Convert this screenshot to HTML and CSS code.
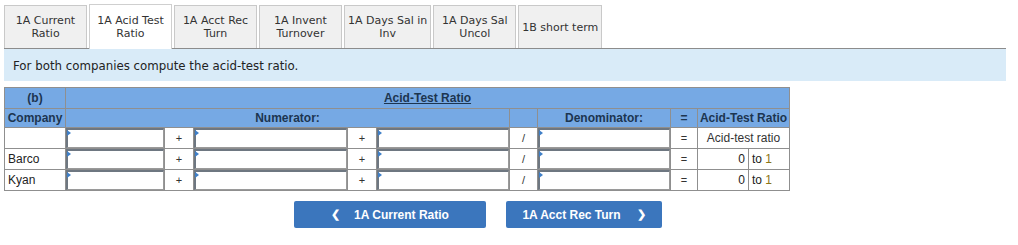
FILE: index.html
```html
<!DOCTYPE html>
<html lang="en">
<head>
  <meta charset="UTF-8">
  <title>Acid-Test Ratio</title>
  <link rel="stylesheet" href="styles.css">
</head>
<body>
  <div class="page">
    <!-- zakładki -->
    <div class="tabs">
      <div class="tab">1A Current<br>Ratio</div>
      <div class="tab active">1A Acid Test<br>Ratio</div>
      <div class="tab">1A Acct Rec<br>Turn</div>
      <div class="tab">1A Invent<br>Turnover</div>
      <div class="tab">1A Days Sal in<br>Inv</div>
      <div class="tab">1A Days Sal<br>Uncol</div>
      <div class="tab">1B short term</div>
    </div>
    <div class="instructions">For both companies compute the acid-test ratio.</div>

    <table class="ratio-table">
      <colgroup>
        <col style="width:61px"><col style="width:99px"><col style="width:29px">
        <col style="width:154px"><col style="width:29px"><col style="width:133px">
        <col style="width:28px"><col style="width:133px"><col style="width:27px">
        <col style="width:51px"><col style="width:41px">
      </colgroup>
      <tr class="head head-top">
        <th>(b)</th>
        <th colspan="10"><u>Acid-Test Ratio</u></th>
      </tr>
      <tr class="head">
        <th>Company</th>
        <th colspan="5">Numerator:</th>
        <th></th>
        <th>Denominator:</th>
        <th>=</th>
        <th colspan="2">Acid-Test Ratio</th>
      </tr>
      <tr>
        <td class="name"></td>
        <td class="field"><input type="text"></td>
        <td class="op">+</td>
        <td class="field"><input type="text"></td>
        <td class="op">+</td>
        <td class="field"><input type="text"></td>
        <td class="op">/</td>
        <td class="field"><input type="text"></td>
        <td class="op">=</td>
        <td class="label" colspan="2">Acid-test ratio</td>
      </tr>
      <tr>
        <td class="name">Barco</td>
        <td class="field"><input type="text"></td>
        <td class="op">+</td>
        <td class="field"><input type="text"></td>
        <td class="op">+</td>
        <td class="field"><input type="text"></td>
        <td class="op">/</td>
        <td class="field"><input type="text"></td>
        <td class="op">=</td>
        <td class="num">0</td>
        <td class="to">to <span class="one">1</span></td>
      </tr>
      <tr>
        <td class="name">Kyan</td>
        <td class="field"><input type="text"></td>
        <td class="op">+</td>
        <td class="field"><input type="text"></td>
        <td class="op">+</td>
        <td class="field"><input type="text"></td>
        <td class="op">/</td>
        <td class="field"><input type="text"></td>
        <td class="op">=</td>
        <td class="num">0</td>
        <td class="to">to <span class="one">1</span></td>
      </tr>
    </table>

    <div class="nav">
      <button class="nav-btn prev"><span class="chev">&#10094;</span>1A Current Ratio</button>
      <button class="nav-btn next">1A Acct Rec Turn<span class="chev">&#10095;</span></button>
    </div>
  </div>
</body>
</html>
```

FILE: styles.css
```css
body {
  margin: 0;
  background-color: #ffffff;
  font-family: "DejaVu Sans", Verdana, sans-serif;
  color: #222222;
}

.page {
  padding: 3px 0 0 4px;
}

.tabs {
  display: flex;
  align-items: flex-end;
  gap: 2px;
  height: 45px;
}

.tab {
  box-sizing: border-box;
  min-width: 83px;
  height: 43px;
  padding: 0 3px;
  display: flex;
  align-items: center;
  justify-content: center;
  text-align: center;
  font-size: 11px;
  line-height: 13px;
  color: #333333;
  background-color: #f0f0f0;
  border: 1px solid #c9c9c9;
  border-bottom: none;
}

.tab.active {
  height: 45px;
  background-color: #ffffff;
  border-color: #cfcfcf;
  position: relative;
  z-index: 1;
  margin-bottom: -1px;
}

.instructions {
  width: 1002px;
  box-sizing: border-box;
  height: 33px;
  padding: 10px 0 0 9px;
  font-size: 11.8px;
  color: #222222;
  background-color: #d9ebf8;
  border-top: 1px solid #8c8c8c;
}

.ratio-table {
  margin-top: 6px;
  border-collapse: collapse;
  table-layout: fixed;
  width: 785px;
  font-family: "Liberation Sans", Arial, sans-serif;
  font-size: 12px;
  color: #222222;
}

.ratio-table th,
.ratio-table td {
  border: 1px solid #8f8f8f;
  padding: 0;
}

.head th {
  background-color: #76a9e4;
  color: #1c3550;
  font-weight: bold;
  height: 18px;
  text-align: center;
}

.head-top th {
  height: 20px;
}

.ratio-table td {
  height: 20px;
}

.name {
  padding-left: 3px !important;
  text-align: left;
}

.op {
  text-align: center;
  color: #333333;
  font-size: 11px;
}

.field {
  position: relative;
}

.field::before {
  content: "";
  position: absolute;
  top: 2px;
  left: 1px;
  border-top: 3px solid transparent;
  border-bottom: 3px solid transparent;
  border-left: 4px solid #3f7fc7;
}

.field input {
  box-sizing: border-box;
  display: block;
  width: 100%;
  height: 20px;
  margin: 0;
  border: 1px solid #9a9a9a;
  border-top: 2px solid #6e7781;
  border-left: 2px solid #6e7781;
  background-color: #ffffff;
}

.label {
  text-align: center;
  color: #333333;
}

.num {
  text-align: right;
  padding-right: 3px !important;
}

.to {
  padding-left: 3px !important;
}

.one {
  color: #8a7415;
}

.nav {
  display: flex;
  gap: 20px;
  margin: 10px 0 0 290px;
}

.nav-btn {
  height: 27px;
  border: none;
  border-radius: 2px;
  background-color: #3b76bd;
  color: #ffffff;
  font-family: "Liberation Sans", Arial, sans-serif;
  font-size: 12px;
  font-weight: bold;
  display: flex;
  align-items: center;
  justify-content: center;
  cursor: pointer;
}

.prev {
  width: 192px;
}

.next {
  width: 156px;
}

.chev {
  font-size: 11px;
}

.prev .chev {
  margin-right: 14px;
}

.next .chev {
  margin-left: 16px;
}
```
